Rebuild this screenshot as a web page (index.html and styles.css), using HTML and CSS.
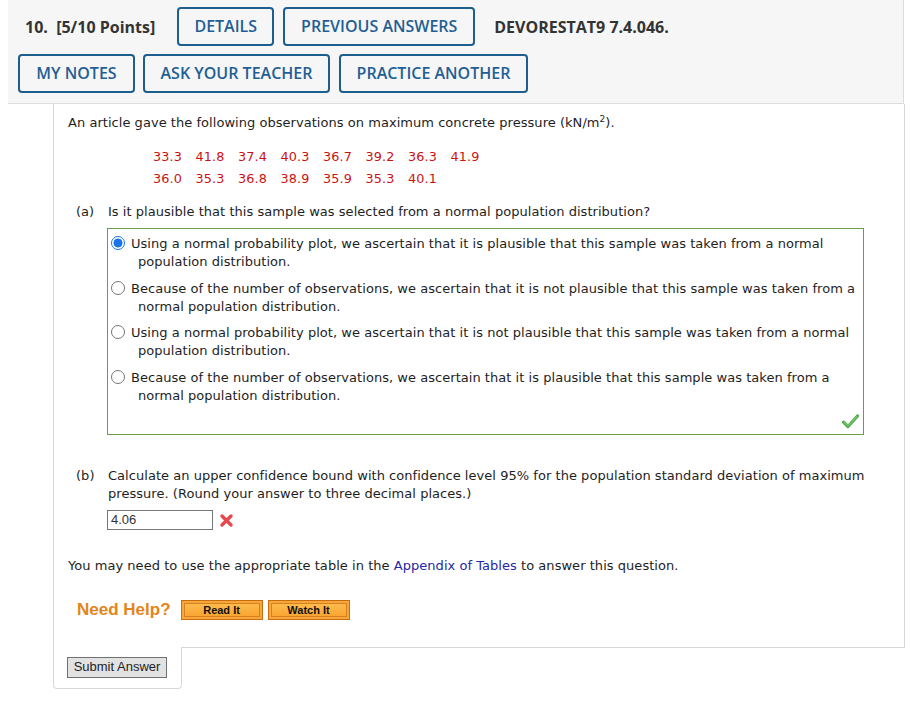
FILE: index.html
```html
<!DOCTYPE html>
<html>
<head>
<meta charset="utf-8">
<link rel="stylesheet" href="styles.css">
</head>
<body>
<div class="header">
  <div class="hrow">
    <span class="qtitle">10.&nbsp; [5/10 Points]</span>
    <span class="hbtn w-details">DETAILS</span>
    <span class="hbtn w-prev">PREVIOUS ANSWERS</span>
    <span class="qref">DEVORESTAT9 7.4.046.</span>
  </div>
  <div class="hrow row2">
    <span class="hbtn w-notes">MY NOTES</span>
    <span class="hbtn w-ask">ASK YOUR TEACHER</span>
    <span class="hbtn w-practice">PRACTICE ANOTHER</span>
  </div>
</div>
<div class="content">
  <p class="intro">An article gave the following observations on maximum concrete pressure (kN/m<sup>2</sup>).</p>
  <div class="data">
    <span>33.3</span><span>41.8</span><span>37.4</span><span>40.3</span><span>36.7</span><span>39.2</span><span>36.3</span><span>41.9</span>
    <span>36.0</span><span>35.3</span><span>36.8</span><span>38.9</span><span>35.9</span><span>35.3</span><span>40.1</span>
  </div>
  <div class="part part-a">
    <span class="plabel">(a)</span>
    <div class="pbody">
      <div class="ptext">Is it plausible that this sample was selected from a normal population distribution?</div>
      <div class="choices">
        <div class="opt"><span class="radio checked"></span>Using a normal probability plot, we ascertain that it is plausible that this sample was taken from a normal population distribution.</div>
        <div class="opt"><span class="radio"></span>Because of the number of observations, we ascertain that it is not plausible that this sample was taken from a normal population distribution.</div>
        <div class="opt"><span class="radio"></span>Using a normal probability plot, we ascertain that it is not plausible that this sample was taken from a normal population distribution.</div>
        <div class="opt"><span class="radio"></span>Because of the number of observations, we ascertain that it is plausible that this sample was taken from a normal population distribution.</div>
        <div class="checkrow">
          <svg class="check" width="17" height="15" viewBox="0 0 17 15"><path d="M1.5 8.2 L6 12.5 L15.5 2" fill="none" stroke="#4fa84a" stroke-width="3.2" stroke-linecap="round" stroke-linejoin="round"/><path d="M2 8.2 L6 11.8 L15 2.4" fill="none" stroke="#7cc873" stroke-width="1.2" stroke-linecap="round" stroke-linejoin="round"/></svg>
        </div>
      </div>
    </div>
  </div>
  <div class="part part-b">
    <span class="plabel">(b)</span>
    <div class="pbody">
      <div class="ptext">Calculate an upper confidence bound with confidence level 95% for the population standard deviation of maximum pressure. (Round your answer to three decimal places.)</div>
      <div class="answer">
        <span class="input">4.06</span>
        <svg class="cross" width="15" height="15" viewBox="0 0 15 15"><path d="M3 3 L12 12 M12 3 L3 12" stroke="#e8474f" stroke-width="3.4" stroke-linecap="round"/></svg>
      </div>
    </div>
  </div>
  <p class="note">You may need to use the appropriate table in the <a class="link">Appendix of Tables</a> to answer this question.</p>
  <div class="help">
    <span class="needhelp">Need Help?</span>
    <span class="obtn"><span>Read It</span></span>
    <span class="obtn"><span>Watch It</span></span>
  </div>
</div>
<div class="submit-tab">
  <span class="submit">Submit Answer</span>
</div>
</body>
</html>
```

FILE: styles.css
```css
html, body {
  margin: 0;
  padding: 0;
  background: #fff;
}
body {
  font-family: "DejaVu Sans", Verdana, sans-serif;
  font-size: 13px;
  letter-spacing: 0.04px;
  color: #1e1e1e;
}
.header {
  margin-left: 8px;
  width: 896px;
  background: #f6f6f6;
  border-right: 1px solid #dcdcdc;
  border-bottom: 1px solid #dcdcdc;
  padding: 7px 0 10px 10px;
  box-sizing: border-box;
  font-family: "Open Sans", sans-serif;
  letter-spacing: 0;
}
.hrow {
  display: flex;
  align-items: center;
  gap: 9px;
}
.row2 {
  margin-top: 8px;
}
.qtitle {
  font-weight: 700;
  font-size: 16px;
  color: #333;
  margin-left: 7px;
  margin-right: 13px;
}
.qref {
  font-weight: 700;
  font-size: 16px;
  color: #333;
  margin-left: 10px;
}
.hbtn {
  display: inline-flex;
  align-items: center;
  justify-content: center;
  height: 39px;
  box-sizing: border-box;
  padding: 0 0 1px;
  border: 2px solid #1c5f8e;
  border-radius: 4px;
  color: #1f5f95;
  font-size: 16px;
  font-weight: 600;
  background: transparent;
}
.w-details { width: 97px; }
.w-prev { width: 192px; }
.w-notes { width: 117px; }
.w-ask { width: 187px; }
.w-practice { width: 189px; }
.row2 .w-ask { margin-left: -1px; }
.content {
  margin-left: 53px;
  width: 852px;
  box-sizing: border-box;
  border-left: 1px solid #d8d8d8;
  border-right: 1px solid #d8d8d8;
  border-bottom: 1px solid #d8d8d8;
  padding: 10px 0 27px 14px;
  line-height: 18px;
}
.intro {
  margin: 0;
}
sup {
  font-size: 9px;
  line-height: 0;
  vertical-align: 5px;
}
.data {
  margin: 14px 0 0 85px;
  display: grid;
  grid-template-columns: repeat(8, 42.5px);
  grid-auto-rows: 22px;
  align-items: center;
  color: #cc1111;
  font-size: 12.8px;
  letter-spacing: 0.1px;
}
.part {
  display: flex;
}
.part-a {
  margin-top: 13px;
}
.part-b {
  margin-top: 32px;
}
.plabel {
  width: 31px;
  margin-left: 8px;
  flex: none;
}
.pbody {
  width: 757px;
}
.part-b .pbody {
  width: 790px;
}
.ptext {
  padding-left: 1px;
}
.choices {
  margin-top: 7px;
  border: 1px solid #6b9c4b;
  padding: 6px 2px 0 0;
}
.opt {
  padding-left: 30px;
  text-indent: -27px;
  margin-bottom: 8.5px;
}
.radio {
  display: inline-block;
  width: 12px;
  height: 12px;
  border: 1px solid #767676;
  border-radius: 50%;
  box-sizing: content-box;
  vertical-align: -2px;
  margin-right: 6px;
  text-indent: 0;
  background: #fff;
}
.radio.checked {
  border-color: #1a73e8;
  background: radial-gradient(circle, #1a73e8 0 4.2px, #fff 4.8px);
}
.checkrow {
  height: 21px;
  display: flex;
  justify-content: flex-end;
  align-items: flex-start;
  margin-right: 2px;
}
.check {
  display: block;
  margin-top: 1px;
}
.answer {
  margin-top: 7px;
  display: flex;
  align-items: center;
  gap: 6px;
}
.input {
  width: 106px;
  height: 20px;
  box-sizing: border-box;
  border: 1px solid #767676;
  font-family: "Liberation Sans", Arial, sans-serif;
  font-size: 13px;
  letter-spacing: 0;
  color: #333;
  padding: 0 3px;
  line-height: 18px;
}
.cross {
  display: block;
}
.note {
  margin: 27px 0 0;
}
.link {
  color: #2626a6;
  text-decoration: none;
}
.help {
  margin-top: 25px;
  display: flex;
  align-items: center;
  gap: 5px;
  padding-left: 9px;
}
.needhelp {
  font-family: "Liberation Sans", Arial, sans-serif;
  font-weight: 700;
  font-size: 17px;
  letter-spacing: 0;
  color: #e3851a;
  margin-right: 5px;
}
.obtn {
  display: inline-block;
  width: 82px;
  height: 20px;
  box-sizing: border-box;
  border: 1px solid #c46d12;
  background: #f7a637;
  padding: 2px;
}
.obtn span {
  display: flex;
  align-items: center;
  justify-content: center;
  height: 100%;
  box-sizing: border-box;
  border: 1px solid #d6801f;
  background: linear-gradient(#ffbb4d, #f9a531);
  font-family: "Liberation Sans", Arial, sans-serif;
  font-weight: 700;
  font-size: 11px;
  letter-spacing: 0;
  color: #111;
}
.submit-tab {
  margin-left: 53px;
  margin-top: -1px;
  width: 129px;
  box-sizing: border-box;
  background: #fff;
  border-left: 1px solid #d8d8d8;
  border-right: 1px solid #d8d8d8;
  border-bottom: 1px solid #d8d8d8;
  border-radius: 0 0 4px 4px;
  padding: 10px 0 10px 13px;
  position: relative;
}
.submit {
  display: inline-block;
  width: 100px;
  height: 21px;
  box-sizing: border-box;
  border: 1px solid #707070;
  background: #e2e2e2;
  font-family: "Liberation Sans", Arial, sans-serif;
  font-size: 13px;
  letter-spacing: 0;
  color: #222;
  text-align: center;
  line-height: 18px;
}
```
